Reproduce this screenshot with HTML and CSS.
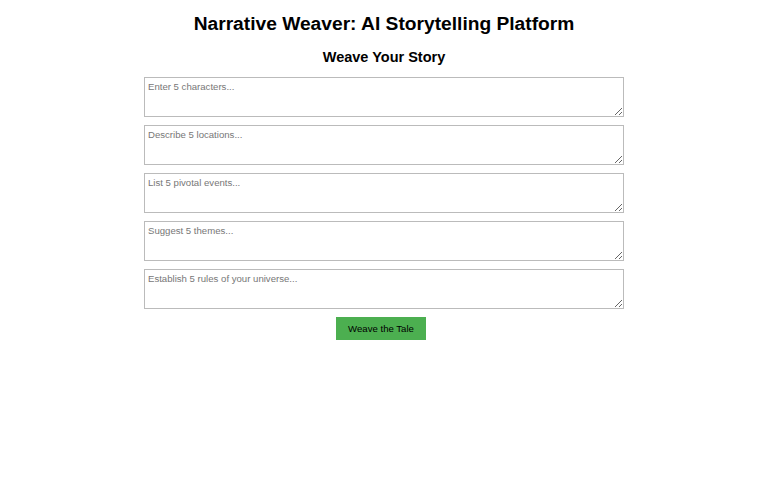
FILE: index.html
```html
<!DOCTYPE html>
<html lang="en">
<head>
  <meta charset="UTF-8" />
  <meta name="viewport" content="width=device-width, initial-scale=1.0"/>
  <title>Narrative Weaver</title>
  <link rel="stylesheet" href="styles.css">
</head>
<body>

  <h1 class="title">Narrative Weaver: AI Storytelling Platform</h1>

  <div class="story-form">
    <h2>Weave Your Story</h2>
    <textarea id="characters" placeholder="Enter 5 characters..."></textarea>
    <textarea id="locations" placeholder="Describe 5 locations..."></textarea>
    <textarea id="events" placeholder="List 5 pivotal events..."></textarea>
    <textarea id="themes" placeholder="Suggest 5 themes..."></textarea>
    <textarea id="rules" placeholder="Establish 5 rules of your universe..."></textarea>
    <div class="actions">
      <button class="weave-btn">Weave the Tale</button>
    </div>
  </div>

</body>
</html>
```

FILE: styles.css
```css
body {
  margin: 0;
  font-family: 'Liberation Sans', Arial, sans-serif;
  color: #000;
  background: #fff;
}

.title {
  font-size: 19.2px;
  text-align: center;
  margin: 13px 0 0;
}

.story-form {
  width: 480px;
  margin: 0 auto;
  display: flex;
  flex-direction: column;
  gap: 8px;
}

.story-form h2 {
  font-size: 14.5px;
  text-align: center;
  margin: 14px 0 4px;
}

.story-form textarea {
  height: 40px;
  box-sizing: border-box;
  width: 100%;
  padding: 3px;
  border: 1px solid #bbb;
  font-family: 'Liberation Sans', Arial, sans-serif;
  font-size: 9.6px;
}

.story-form textarea::placeholder {
  color: #777;
}

.actions {
  display: flex;
  justify-content: center;
  padding-right: 6px;
}

.weave-btn {
  background: #4caf50;
  border: none;
  color: #000;
  font-family: 'Liberation Sans', Arial, sans-serif;
  font-size: 9.6px;
  width: 90px;
  height: 23px;
  cursor: pointer;
}
```
